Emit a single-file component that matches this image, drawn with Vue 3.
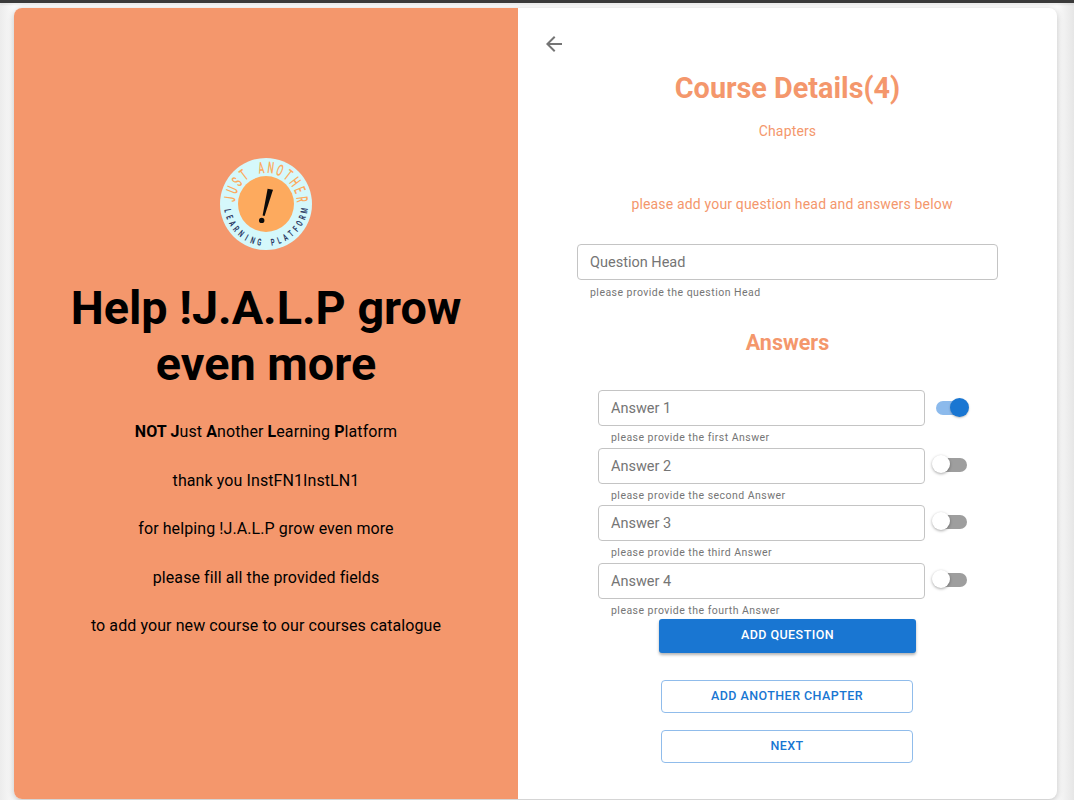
<script setup>
const lines = [
  'thank you InstFN1InstLN1',
  'for helping !J.A.L.P grow even more',
  'please fill all the provided fields',
  'to add your new course to our courses catalogue',
]
const answers = [
  { label: 'Answer 1', help: 'please provide the first Answer', on: true },
  { label: 'Answer 2', help: 'please provide the second Answer', on: false },
  { label: 'Answer 3', help: 'please provide the third Answer', on: false },
  { label: 'Answer 4', help: 'please provide the fourth Answer', on: false },
]
// Each logo letter sits on the ring at its own angle, squeezed to the condensed look of the badge.
const ring = (text, span, radius, scaleX, bottom) => {
  const chars = [...text]
  const step = span / (chars.length - 1)
  return chars.map((ch, i) => {
    const a = -span / 2 + step * i
    const rot = bottom ? -a : a
    const offset = bottom ? radius : -radius
    return {
      ch,
      id: i,
      transform: `translate(46 46) rotate(${rot.toFixed(2)}) translate(0 ${offset}) scale(${scaleX} 1)`,
    }
  })
}
const topLetters = ring('JUST ANOTHER', 165, 31, 0.55, false)
const bottomLetters = ring('LEARNING PLATFORM', 160, 42, 0.62, true)
</script>

<template>
  <div class="page">
    <div class="topbar"></div>
    <main class="card">
      <section class="left">
        <svg class="logo" viewBox="0 0 92 92" width="92" height="92" role="img" aria-label="Just Another Learning Platform">
          <circle cx="46" cy="46" r="46" fill="#d5f8fb" />
          <circle cx="46" cy="46" r="28" fill="#fdaa5e" />
          <text v-for="l in topLetters" :key="'t' + l.id" class="arc-top" :transform="l.transform" text-anchor="middle">{{ l.ch }}</text>
          <text v-for="l in bottomLetters" :key="'b' + l.id" class="arc-bottom" :transform="l.transform" text-anchor="middle">{{ l.ch }}</text>
          <path d="M47.6 30.8 L53 31.8 L44.6 58 L42.6 57.6 Z" fill="#0a0a0a" />
          <circle cx="41.7" cy="62.4" r="2.7" fill="#0a0a0a" />
        </svg>
        <h1>Help !J.A.L.P grow even more</h1>
        <p class="tag"><b>NOT J</b>ust <b>A</b>nother <b>L</b>earning <b>P</b>latform</p>
        <p v-for="l in lines" :key="l">{{ l }}</p>
      </section>

      <section class="right">
        <button class="back" aria-label="Back">
          <svg viewBox="0 0 24 24" width="24" height="24"><path d="M20 11H7.83l5.59-5.59L12 4l-8 8 8 8 1.41-1.41L7.83 13H20v-2z" fill="#757575" /></svg>
        </button>
        <h2>Course Details(4)</h2>
        <div class="sub">Chapters</div>
        <div class="hint">please add your question head and answers below</div>

        <div class="field head">
          <div class="input">Question Head</div>
          <div class="help">please provide the question Head</div>
        </div>

        <h3>Answers</h3>

        <div class="answers">
          <div v-for="a in answers" :key="a.label" class="answer">
            <div class="field">
              <div class="input">{{ a.label }}</div>
              <div class="help">{{ a.help }}</div>
            </div>
            <div class="switch" :class="{ on: a.on }"><span class="track"></span><span class="thumb"></span></div>
          </div>
        </div>

        <button class="btn solid">ADD QUESTION</button>
        <button class="btn outline first">ADD ANOTHER CHAPTER</button>
        <button class="btn outline second">NEXT</button>
      </section>
    </main>
  </div>
</template>

<style>
html, body { margin: 0; background: #fafafa; }
</style>

<style scoped>
.page {
  height: 800px;
  overflow: hidden;
  background: linear-gradient(90deg, #ececec 0, #fafafa 14px, #fafafa 1057px, #e6e6e6 1074px);
  font-family: Roboto, "Liberation Sans", sans-serif;
}
.topbar {
  height: 3px;
  background: #3a3a3a;
  margin-bottom: 5px;
  box-shadow: 0 2px 2px rgba(0, 0, 0, .06);
}
.card {
  width: 1043px;
  height: 791px;
  margin-left: 14px;
  display: flex;
  border-radius: 8px;
  overflow: hidden;
  background: #fff;
  box-shadow: 0 2px 6px rgba(0, 0, 0, .22);
}
.left {
  width: 504px;
  flex: none;
  box-sizing: border-box;
  background: #f4976c;
  display: flex;
  flex-direction: column;
  align-items: center;
  padding: 150px 50px 0;
  color: #000;
  text-align: center;
}
.logo { flex: none; margin-bottom: 30px; }
.arc-top { font: 500 16px Roboto, sans-serif; fill: #fdaa5e; }
.arc-bottom { font: 700 9.5px Roboto, sans-serif; fill: #2c3a66; }
h1 {
  margin: 0 0 30px;
  font-size: 46.8px;
  line-height: 56px;
  font-weight: 700;
  width: 404px;
}
.left p {
  margin: 0 0 29.5px;
  font-size: 16px;
  line-height: 19px;
  letter-spacing: .09px;
  white-space: nowrap;
}
.left p b { font-weight: 700; }
.right {
  flex: 1;
  display: flex;
  flex-direction: column;
  align-items: center;
  position: relative;
  min-width: 0;
  color: #f4976c;
}
.back {
  position: absolute;
  left: 24px;
  top: 24px;
  width: 24px;
  height: 24px;
  padding: 0;
  border: 0;
  background: none;
}
h2 {
  margin: 63px 0 0;
  font-size: 28.8px;
  line-height: 34px;
  font-weight: 700;
}
.sub {
  margin-top: 16px;
  font-size: 14px;
  line-height: 20px;
  letter-spacing: .15px;
}
.hint {
  margin: 53px 0 0 9px;
  font-size: 14px;
  line-height: 20px;
  letter-spacing: .17px;
}
.field { display: flex; flex-direction: column; }
.head { width: 421px; margin-top: 30px; }
.head .help { margin-top: 7px; }
.input {
  box-sizing: border-box;
  height: 36px;
  border: 1px solid #c4c4c4;
  border-radius: 4px;
  padding: 1px 12px 0;
  display: flex;
  align-items: center;
  font-size: 14.5px;
  color: #757575;
  background: #fff;
}
.help {
  margin: 6px 12px 0 13px;
  font-size: 10.5px;
  line-height: 12px;
  letter-spacing: .47px;
  color: #757575;
}
h3 {
  margin: 31px 0 0;
  font-size: 21.5px;
  line-height: 26px;
  font-weight: 700;
}
.answers {
  margin-top: 34px;
  width: 379px;
  display: flex;
  flex-direction: column;
  gap: 3.67px;
}
.answer { display: flex; align-items: flex-start; }
.answer .field { width: 327px; }
.switch {
  position: relative;
  width: 34px;
  height: 20px;
  margin: 7px 0 0 11px;
}
.switch.on { margin-top: 8px; }
.track {
  position: absolute;
  left: 5px;
  right: 3px;
  top: 3px;
  height: 14px;
  border-radius: 7px;
  background: #9e9e9e;
}
.thumb {
  position: absolute;
  left: -4px;
  top: 0;
  width: 18px;
  height: 18px;
  border-radius: 50%;
  background: #fff;
  box-shadow: 0 1px 3px rgba(0, 0, 0, .35);
}
.switch.on .track { left: 0; right: 6px; background: #8cbaec; }
.switch.on .thumb { left: 14px; width: 19px; height: 19px; background: #1976d2; box-shadow: 0 1px 2px rgba(0, 0, 0, .25); }
.btn {
  display: block;
  box-sizing: border-box;
  font: 500 12.5px/1 Roboto, sans-serif;
  letter-spacing: .45px;
  border-radius: 3px;
  padding: 0 0 1px;
}
.solid {
  width: 257px;
  height: 34px;
  margin-top: 2px;
  border: 0;
  background: #1976d2;
  color: #fff;
  box-shadow: 0 2px 3px rgba(0, 0, 0, .3);
}
.outline {
  width: 252px;
  margin-right: 1px;
  border: 1px solid #90bceb;
  border-radius: 4px;
  background: #fff;
  color: #1976d2;
}
.first { height: 33px; margin-top: 27px; }
.second { height: 33px; margin-top: 17px; }
</style>
